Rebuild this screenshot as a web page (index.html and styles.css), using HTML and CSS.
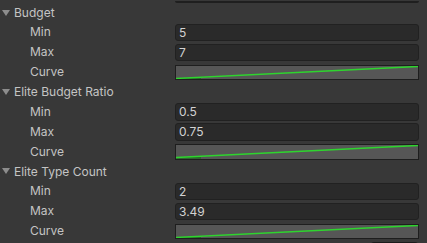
FILE: index.html
```html
<!DOCTYPE html>
<html lang="en">
<head>
    <meta charset="UTF-8">
    <meta name="viewport" content="width=device-width, initial-scale=1.0">
    <title>Elite Settings</title>
    <link rel="stylesheet" href="styles.css">
</head>
<body>

    <div class="prev-field"></div>

    <div class="section">
        <div class="header">
            <svg class="arrow" width="8" height="7" viewBox="0 0 8 7"><polygon points="0,0 8,0 4,6" fill="#8d8d8d"/></svg>
            <span>Budget</span>
        </div>
        <div class="row">
            <span class="label">Min</span>
            <div class="field">5</div>
        </div>
        <div class="row">
            <span class="label">Max</span>
            <div class="field">7</div>
        </div>
        <div class="row">
            <span class="label">Curve</span>
            <div class="curve">
                <svg viewBox="0 0 242 14" preserveAspectRatio="none">
                    <line x1="0" y1="13.5" x2="25" y2="13.5" stroke="#1d6b1d" stroke-width="1.5"/>
                    <line x1="0" y1="13" x2="242" y2="0.5" stroke="#2ed42e" stroke-width="1.6"/>
                </svg>
            </div>
        </div>
    </div>

    <div class="section">
        <div class="header">
            <svg class="arrow" width="8" height="7" viewBox="0 0 8 7"><polygon points="0,0 8,0 4,6" fill="#8d8d8d"/></svg>
            <span>Elite Budget Ratio</span>
        </div>
        <div class="row">
            <span class="label">Min</span>
            <div class="field">0.5</div>
        </div>
        <div class="row">
            <span class="label">Max</span>
            <div class="field">0.75</div>
        </div>
        <div class="row">
            <span class="label">Curve</span>
            <div class="curve">
                <svg viewBox="0 0 242 14" preserveAspectRatio="none">
                    <line x1="0" y1="13.5" x2="25" y2="13.5" stroke="#1d6b1d" stroke-width="1.5"/>
                    <line x1="0" y1="13" x2="242" y2="0.5" stroke="#2ed42e" stroke-width="1.6"/>
                </svg>
            </div>
        </div>
    </div>

    <div class="section">
        <div class="header">
            <svg class="arrow" width="8" height="7" viewBox="0 0 8 7"><polygon points="0,0 8,0 4,6" fill="#8d8d8d"/></svg>
            <span>Elite Type Count</span>
        </div>
        <div class="row">
            <span class="label">Min</span>
            <div class="field">2</div>
        </div>
        <div class="row">
            <span class="label">Max</span>
            <div class="field">3.49</div>
        </div>
        <div class="row">
            <span class="label">Curve</span>
            <div class="curve">
                <svg viewBox="0 0 242 14" preserveAspectRatio="none">
                    <line x1="0" y1="13.5" x2="25" y2="13.5" stroke="#1d6b1d" stroke-width="1.5"/>
                    <line x1="0" y1="13" x2="242" y2="0.5" stroke="#2ed42e" stroke-width="1.6"/>
                </svg>
            </div>
        </div>
    </div>

    <div class="next-button"></div>

</body>
</html>
```

FILE: styles.css
```css
/* Inspector look */
body {
    font-family: 'Inter', 'Liberation Sans', sans-serif;
    font-size: 12px;
    background-color: #383838;
    color: #c4c4c4;
    margin: 0;
    padding-top: 1px;
    overflow: hidden;
}

.prev-field {
    margin-left: 175px;
    width: 244px;
    height: 2px;
    background: #1f1f1f;
    border-radius: 0 0 3px 3px;
}

.section {
    height: 79.3px;
}

.header {
    height: 19.3px;
    display: flex;
    align-items: center;
    gap: 4px;
    padding-left: 2px;
}

.arrow {
    flex: none;
    margin-top: 1px;
}

.row {
    height: 20px;
    display: grid;
    grid-template-columns: 175px 244px;
    align-items: start;
}

.label {
    padding-left: 30px;
    line-height: 20px;
}

.field {
    margin-top: 1.65px;
    height: 17.4px;
    box-sizing: border-box;
    background: #2a2a2a;
    border: 1px solid #212121;
    border-radius: 3px;
    padding-left: 3px;
    line-height: 15.4px;
    color: #d2d2d2;
}

.curve {
    margin-top: 2.65px;
    height: 15.4px;
    box-sizing: border-box;
    background: #565656;
    border: 1px solid #1e1e1e;
    display: flex;
}

.curve svg {
    width: 100%;
    height: 100%;
    display: block;
}

.next-button {
    margin-left: 371px;
    margin-top: 1px;
    width: 47px;
    height: 10px;
    background: #1b1b1b;
    border-radius: 3px 3px 0 0;
}
```
